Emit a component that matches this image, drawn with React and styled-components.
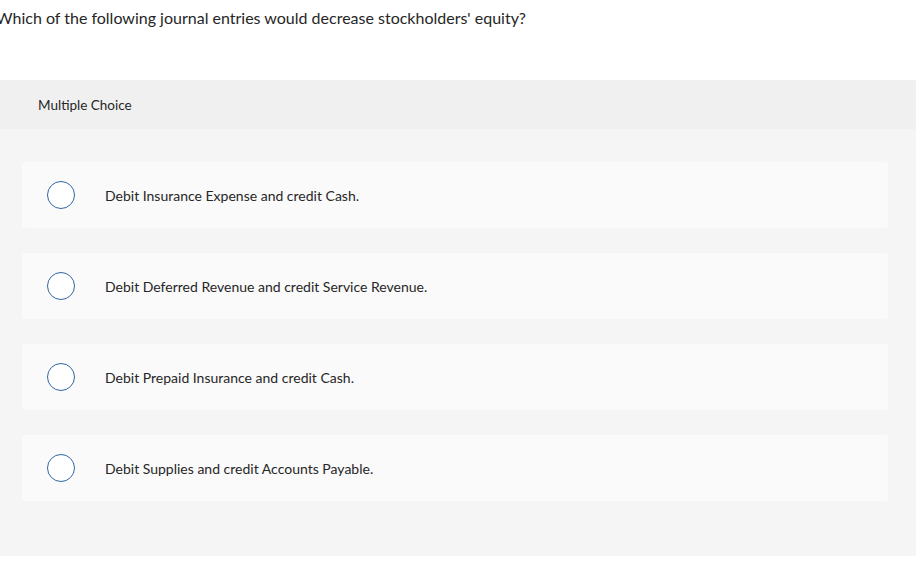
import React from "react";
import styled, { createGlobalStyle } from "styled-components";

const GlobalStyle = createGlobalStyle`
  html, body {
    margin: 0;
    padding: 0;
    background: #ffffff;
    font-family: Lato, "Liberation Sans", sans-serif;
    color: #2b2b2b;
  }
`;

const Page = styled.div`
  width: 918px;
  padding-top: 7px;
`;

const Question = styled.p`
  margin: 0 0 0 -4px;
  font-size: 16px;
  line-height: 21px;
  color: #262626;
`;

const Panel = styled.section`
  margin-top: 52px;
  width: 916px;
  background: #f5f5f5;
  border-radius: 0 0 3px 0;
`;

const PanelHeader = styled.div`
  height: 49px;
  background: #f0f0f0;
  display: flex;
  align-items: center;
  padding-left: 38px;
  font-size: 13.5px;
  color: #262626;
`;

const OptionList = styled.div`
  display: flex;
  flex-direction: column;
  gap: 25px;
  padding: 33px 28px 55px 22px;
`;

const Option = styled.label`
  height: 66px;
  background: #fafafa;
  border-radius: 3px;
  display: flex;
  align-items: center;
  cursor: pointer;
`;

const Radio = styled.span`
  width: 26px;
  height: 26px;
  border: 1.5px solid #2f67a3;
  border-radius: 50%;
  background: #ffffff;
  margin-left: 25px;
  flex-shrink: 0;
`;

const OptionText = styled.span`
  margin-left: 30px;
  font-size: 14px;
  color: #262626;
`;

const options = [
  "Debit Insurance Expense and credit Cash.",
  "Debit Deferred Revenue and credit Service Revenue.",
  "Debit Prepaid Insurance and credit Cash.",
  "Debit Supplies and credit Accounts Payable."
];

const App = () => (
  <Page>
    <GlobalStyle />
    <Question>
      Which of the following journal entries would decrease stockholders' equity?
    </Question>
    <Panel>
      <PanelHeader>Multiple Choice</PanelHeader>
      <OptionList>
        {options.map((text, index) => (
          <Option key={index}>
            <Radio />
            <OptionText>{text}</OptionText>
          </Option>
        ))}
      </OptionList>
    </Panel>
  </Page>
);

export default App;
